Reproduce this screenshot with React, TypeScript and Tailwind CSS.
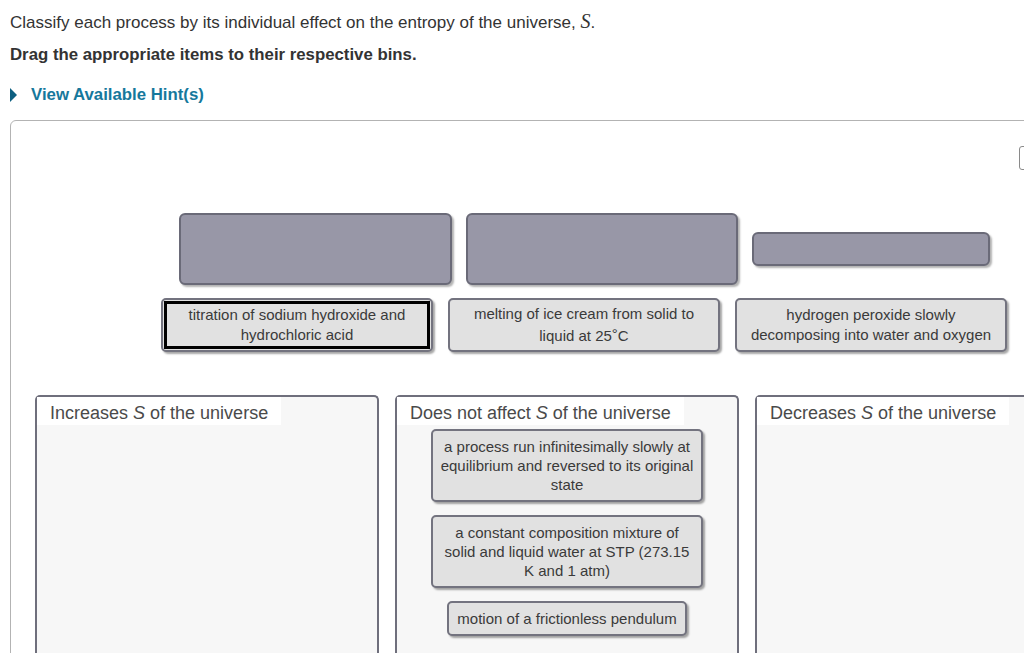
import React from 'react';

const itemCls =
  'rounded-[5px] border-2 border-[#73737f] bg-[#e1e1e1] text-center text-[15px] leading-[19px] text-[#3a3a3a] shadow-[2px_2px_2px_rgba(0,0,0,0.35)]';

function Slot({ w, h }: { w: string; h: string }) {
  return (
    <div
      className={`${w} ${h} rounded-[6px] border-2 border-[#6a6a78] bg-[#9897a7] shadow-[2px_2px_2px_rgba(0,0,0,0.3)]`}
    />
  );
}

function Bin({ label, children }: { label: string; children?: React.ReactNode }) {
  return (
    <div className="w-[344px] h-[300px] shrink-0 rounded-t-[5px] border-2 border-b-0 border-[#6f6f7c] bg-[#f7f7f7]">
      <div className="inline-block bg-white px-[13px] pt-[6px] pb-[1px] text-[18px] leading-[21px] text-[#4a4a4a]">
        {label.split('S')[0]}
        <span className="italic">S</span>
        {label.split('S')[1]}
      </div>
      <div className="mt-[3px] flex flex-col items-center gap-[13px]">{children}</div>
    </div>
  );
}

export default function App() {
  return (
    <div className="w-[1024px] h-[653px] overflow-hidden bg-white font-['Liberation_Sans',Arial,sans-serif] text-[#333]">
      <div className="pl-[10px] pt-[11px]">
        <p className="h-[20px] text-[17px] leading-[20px]">
          Classify each process by its individual effect on the entropy of the universe,{' '}
          <span className="font-['Liberation_Serif',serif] italic text-[20px] leading-none">S</span>.
        </p>
        <p className="mt-[14px] text-[16.8px] leading-[20px] font-bold">
          Drag the appropriate items to their respective bins.
        </p>
        <div className="mt-[20px] flex items-center gap-[14px]">
          <span className="h-0 w-0 border-y-[7px] border-l-[7px] border-y-transparent border-l-[#0d5f80]" />
          <span className="text-[16.8px] leading-[20px] font-bold text-[#16789c]">View Available Hint(s)</span>
        </div>
      </div>

      <div className="relative ml-[10px] mt-[15px] h-[560px] w-[1148px] rounded-tl-[6px] border border-[#b3b3b3]">
        <div className="absolute left-[1008px] top-[25px] h-[24px] w-[40px] rounded-[3px] border border-[#8a8a8a] bg-white" />

        <div className="pt-[92px] flex items-center justify-center gap-[14px]">
          <Slot w="w-[273px]" h="h-[72px]" />
          <Slot w="w-[272px]" h="h-[72px]" />
          <Slot w="w-[238px]" h="h-[34px]" />
        </div>

        <div className="mt-[13px] flex justify-center gap-[15px]">
          <div className={`${itemCls} relative flex h-[54px] w-[272px] items-center justify-center px-[6px] leading-[20px]`}>
            <div className="absolute inset-[1px] border-[3px] border-black" />
            <span>
              titration of sodium hydroxide and
              <br />
              hydrochloric acid
            </span>
          </div>
          <div className={`${itemCls} flex h-[54px] w-[272px] items-center justify-center px-[6px] leading-[20px]`}>
            <span>
              melting of ice cream from solid to
              <br />
              liquid at 25<span className="text-[15px] align-[2px]">°</span>C
            </span>
          </div>
          <div className={`${itemCls} flex h-[54px] w-[272px] items-center justify-center px-[4px] leading-[20px]`}>
            <span>
              hydrogen peroxide slowly
              <br />
              decomposing into water and oxygen
            </span>
          </div>
        </div>

        <div className="mt-[43px] flex gap-[16px] pl-[24px]">
          <Bin label="Increases S of the universe" />
          <Bin label="Does not affect S of the universe">
            <div className={`${itemCls} w-[272px] px-[6px] py-[6px]`}>
              a process run infinitesimally slowly at equilibrium and reversed to its original state
            </div>
            <div className={`${itemCls} w-[272px] px-[6px] py-[6px]`}>
              a constant composition mixture of solid and liquid water at STP (273.15 K and 1 atm)
            </div>
            <div className={`${itemCls} px-[8px] py-[6px]`}>motion of a frictionless pendulum</div>
          </Bin>
          <Bin label="Decreases S of the universe" />
        </div>
      </div>
    </div>
  );
}
